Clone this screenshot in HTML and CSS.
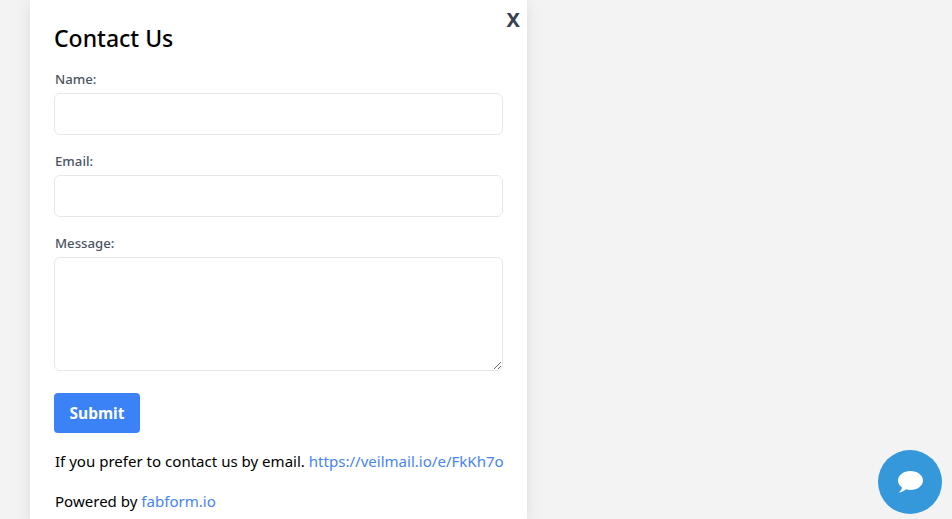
FILE: index.html
```html
<!DOCTYPE html>
<html lang="en">
<head>
<meta charset="utf-8">
<title>Contact Us</title>
<link rel="stylesheet" href="styles.css">
</head>
<body>
<main class="panel">
  <button class="close" type="button">X</button>
  <h1 class="title">Contact Us</h1>
  <form class="form">
    <div class="field">
      <label class="label" for="name">Name:</label>
      <input class="input" id="name" type="text">
    </div>
    <div class="field">
      <label class="label" for="email">Email:</label>
      <input class="input" id="email" type="email">
    </div>
    <div class="field">
      <label class="label" for="message">Message:</label>
      <textarea class="input textarea" id="message"></textarea>
    </div>
    <button class="submit" type="button">Submit</button>
  </form>
  <p class="note">If you prefer to contact us by email. <a href="#">https://veilmail.io/e/FkKh7o</a></p>
  <p class="note powered">Powered by <a href="#">fabform.io</a></p>
</main>
<button class="chat" type="button" aria-label="Open chat">
  <svg class="chat-icon" viewBox="0 0 25 22" width="25" height="22" aria-hidden="true">
    <path fill="#fff" d="M12.500 0C5.600 0 0 4.200 0 9.500c0 2.800 1.500 5.300 4 7-.4 1.900-1.500 3.700-3.300 5 2.700-.1 5.300-1.200 7.300-3.200 1.400.4 2.900.7 4.500.7C19.400 19 25 14.800 25 9.500S19.400 0 12.500 0z"/>
  </svg>
</button>
</body>
</html>
```
FILE: styles.css
```css
* { box-sizing: border-box; }
html, body { height: 100%; }
body {
  margin: 0;
  height: 519px;
  overflow: hidden;
  background: #f3f3f3;
  font-family: "Noto Sans", "Open Sans", sans-serif;
  color: #000;
}
.panel {
  position: relative;
  width: 497px;
  height: 519px;
  margin-left: 30px;
  padding: 22px 24px 0;
  background: #fff;
  box-shadow: 0 4px 14px rgba(0, 0, 0, 0.1);
}
.close {
  position: absolute;
  top: 8px;
  right: 7px;
  padding: 0;
  border: 0;
  background: none;
  font: 700 20px/24px "Noto Sans", sans-serif;
  color: #374151;
}
.title {
  margin: 0 0 15px;
  font-size: 23px;
  line-height: 32px;
  font-weight: 500;
}
.field { margin-bottom: 16px; }
.label {
  display: block;
  height: 20px;
  margin-bottom: 4px;
  padding-left: 1px;
  font-size: 13.200px;
  line-height: 20px;
  font-weight: 500;
  color: #4b5563;
}
.input {
  display: block;
  width: 100%;
  height: 42px;
  border: 1px solid #e5e7eb;
  border-radius: 6px;
  background: #fff;
}
.textarea { height: 114px; }
.submit {
  display: block;
  width: 86px;
  height: 40px;
  margin-top: 22px;
  border: 0;
  border-radius: 4px;
  background: #3b82f6;
  color: #fff;
  font: 700 15.500px/24px "Noto Sans", sans-serif;
}
.note {
  margin: 16px 0 0;
  padding-left: 1px;
  font-size: 15.050px;
  line-height: 24px;
  white-space: nowrap;
}
.powered { margin-top: 16px; }
.note a { color: #4684f7; text-decoration: none; }
.chat {
  position: fixed;
  right: 10px;
  bottom: 5px;
  width: 64px;
  height: 64px;
  padding: 0;
  display: flex;
  align-items: center;
  justify-content: center;
  border: 0;
  border-radius: 50%;
  background: #3498db;
}
```
